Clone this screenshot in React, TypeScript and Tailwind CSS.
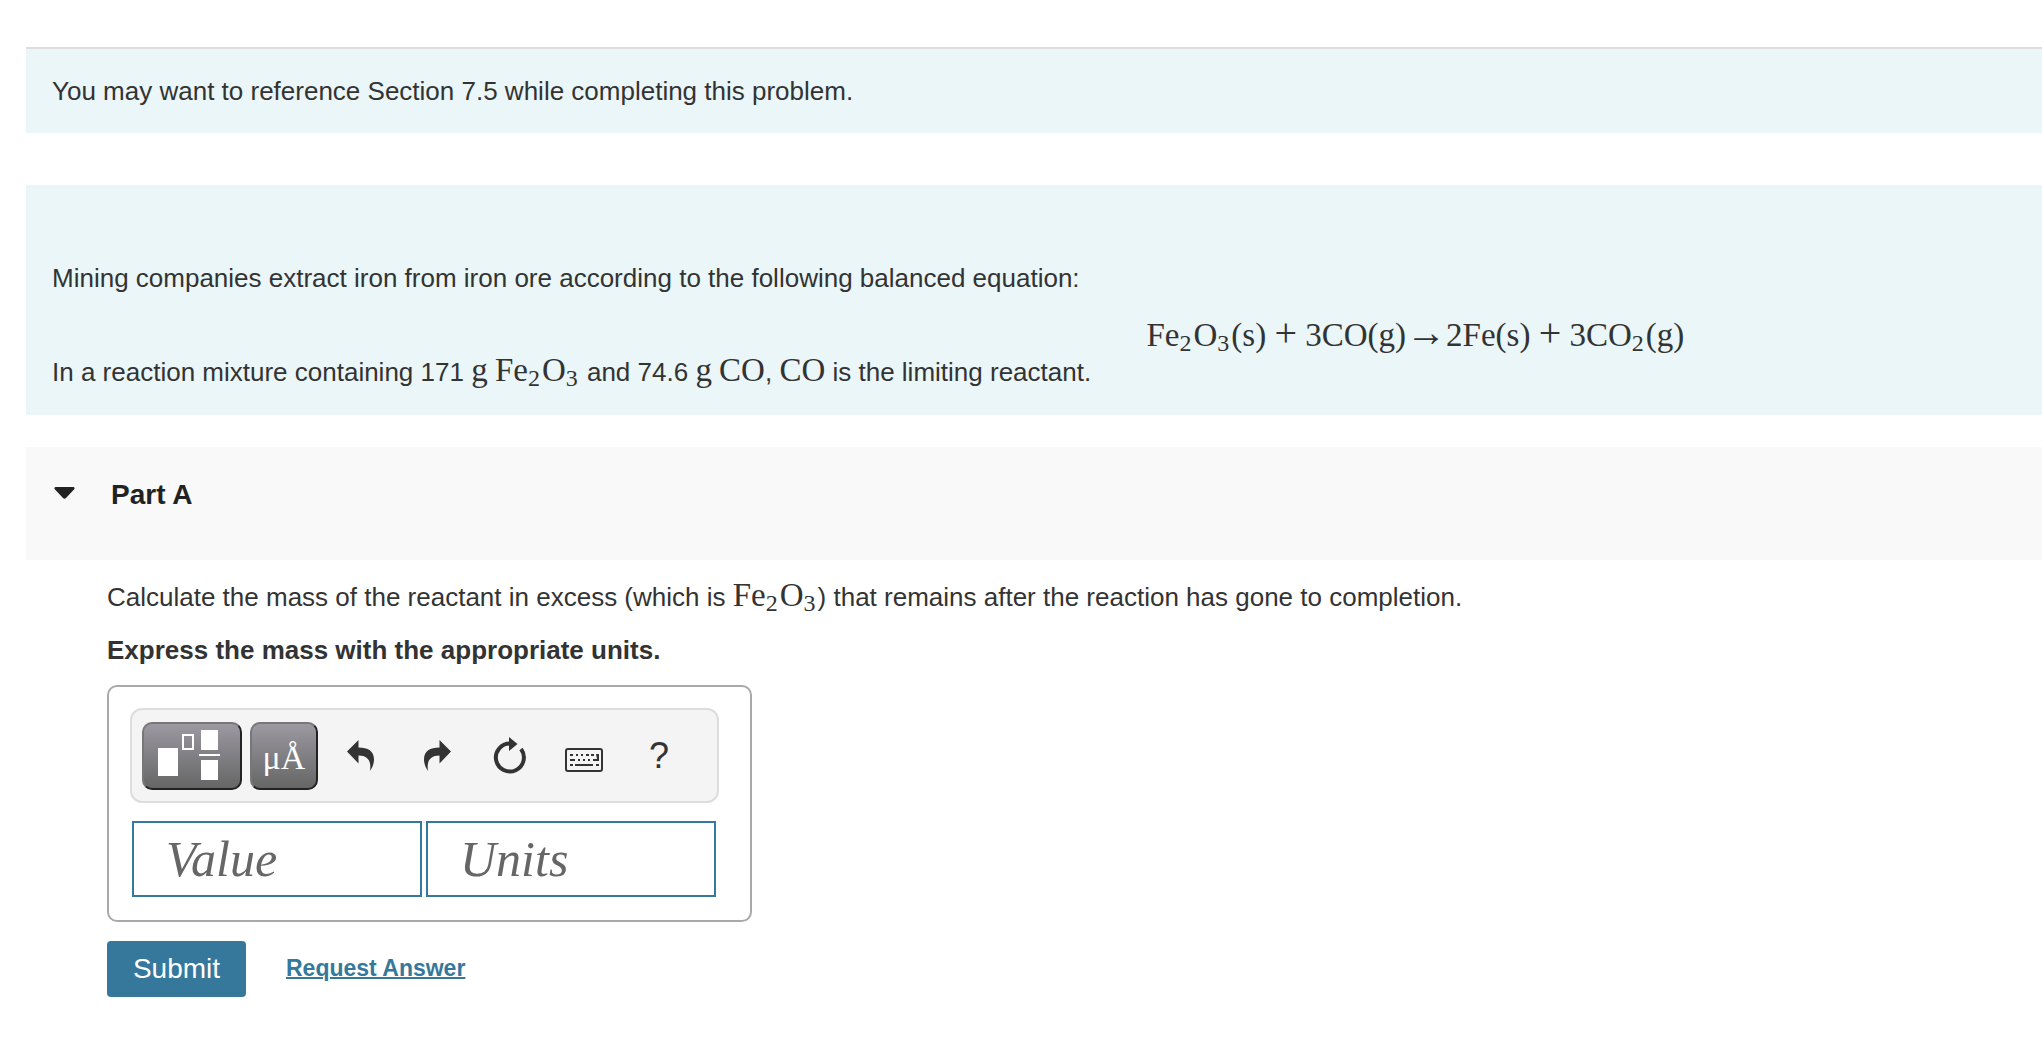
import type { ReactNode } from "react";

// serif spans have no line height of their own, so text lines stay evenly spaced
const Chem = ({ children }: { children: ReactNode }) => (
  <span className="font-['Liberation_Serif',serif] text-[33px] leading-[0]">{children}</span>
);

const Sub = ({ children }: { children: ReactNode }) => (
  <sub className="bottom-[-5px] mr-[2px] text-[24px]">{children}</sub>
);

const Op = ({ children }: { children: ReactNode }) => (
  <span className="text-[40px] leading-[0]">{children}</span>
);

const IronOxide = () => (
  <Chem>
    Fe<Sub>2</Sub>O<Sub>3</Sub>
  </Chem>
);

function TemplatesIcon() {
  return (
    <svg width="68" height="52" viewBox="0 0 68 52" fill="#fff" aria-hidden="true">
      <rect x="0" y="18" width="20" height="28" />
      <rect x="25" y="5" width="10" height="14" fill="none" stroke="#fff" strokeWidth="2" />
      <rect x="43" y="0" width="17" height="20" />
      <rect x="41" y="24" width="21" height="2" />
      <rect x="43" y="30" width="17" height="20" />
    </svg>
  );
}

function ArrowIcon({ flip = false }: { flip?: boolean }) {
  return (
    <svg width="27" height="31" viewBox="0 0 27 31" fill="#333" className={flip ? "-scale-x-100" : ""} aria-hidden="true">
      <path d="M0 11.500 11.500 0v7.500C21 7.500 27 11 27 19.500c0 4-1.500 8-4 11.500C24.500 21 21 15.500 11.500 15.500v8z" />
    </svg>
  );
}

function ResetIcon() {
  return (
    <svg width="34" height="38" viewBox="0 0 34 38" aria-hidden="true">
      <path d="M17 6.500A14 14 0 1 0 28 12" fill="none" stroke="#333" strokeWidth="4" />
      <path d="M16 0 24.500 7 16 14z" fill="#333" />
    </svg>
  );
}

function KeyboardIcon() {
  return (
    <svg width="40" height="24" viewBox="0 0 40 24" fill="#333" aria-hidden="true">
      <rect x="2" y="1" width="36" height="22" rx="2" fill="none" stroke="#333" strokeWidth="2" />
      <path d="M6 6h3v2H6zM12 6h2v2h-2zM17 6h2v2h-2zM22 6h3v2h-3zM27 6h3v2h-3zM32 6h3v7h-6v-2h4zM6 11h5v2H6zM14 11h2v2h-2zM19 11h2v2h-2zM24 11h2v2h-2zM6 16h3v2H6zM11 16h18v2H11zM32 16h3v2h-3z" />
    </svg>
  );
}

export default function App() {
  return (
    <main className="overflow-hidden bg-white pt-[47px] pb-16 pl-[26px] font-['Liberation_Sans',Arial,sans-serif] text-[26px] leading-8 text-[#333]">
      <section className="border-t-2 border-[#ddd] bg-[#eaf6f8] py-[26px] pl-[26px]">
        <p>You may want to reference Section 7.5 while completing this problem.</p>
      </section>

      <section className="mt-[52px] bg-[#eaf6f8] pt-[77px] pb-[27px] pl-[26px]">
        <p>Mining companies extract iron from iron ore according to the following balanced equation:</p>
        <p className="mt-[27px] pl-[55%] whitespace-nowrap">
          <Chem>
            Fe<Sub>2</Sub>O<Sub>3</Sub>(s) <Op>+</Op> 3CO(g)<Op>→</Op>2Fe(s) <Op>+</Op> 3CO<Sub>2</Sub>(g)
          </Chem>
        </p>
        <p className="mt-[3px]">
          In a reaction mixture containing 171 <Chem>g</Chem> <IronOxide /> and 74.6 <Chem>g</Chem> <Chem>CO</Chem>, <Chem>CO</Chem> is the limiting reactant.
        </p>
      </section>

      <section>
        <header className="mt-8 flex h-[113px] items-start gap-9 bg-[#f9f9f9] pt-8 pl-7">
          <button type="button" aria-label="Collapse Part A" className="flex h-7 items-center">
            <svg width="21" height="12" viewBox="0 0 21 12" fill="#222" aria-hidden="true">
              <path d="M1.500 0h18q2 1 .5 2.500l-8 8.500q-1.500 1.500-3 0L1 2.500Q-.5 1 1.500 0z" />
            </svg>
          </button>
          <h2 className="text-[28px] font-bold text-[#222]">Part A</h2>
        </header>

        <div className="pt-[21px] pl-[81px]">
          <p>
            Calculate the mass of the reactant in excess (which is <IronOxide />) that remains after the reaction has gone to completion.
          </p>
          <p className="mt-[21px] font-bold">Express the mass with the appropriate units.</p>

          <form>
            <div className="mt-[19px] w-fit rounded-[10px] border-2 border-[#a9a9a9] pt-[21px] pr-[31px] pb-[23px] pl-[21px]">
              <div className="flex h-[95px] items-center rounded-xl border-2 border-[#ddd] bg-[#f4f4f4] px-[10px]">
                <button type="button" aria-label="Templates" className="flex h-[68px] w-[100px] items-center justify-center rounded-[10px] border-2 border-t-[#777] border-r-[#222] border-b-[#222] border-l-[#777] bg-linear-to-b from-[#9c99a2] to-[#666]">
                  <TemplatesIcon />
                </button>
                <button type="button" aria-label="Symbols" className="ml-2 h-[68px] w-[68px] rounded-[10px] border-2 border-t-[#777] border-r-[#222] border-b-[#222] border-l-[#777] bg-linear-to-b from-[#9c99a2] to-[#666] pt-1 font-['Liberation_Serif',serif] text-[34px] text-white">
                  μÅ
                </button>
                <button type="button" aria-label="Undo" className="ml-[29px]"><ArrowIcon /></button>
                <button type="button" aria-label="Redo" className="ml-[50px]"><ArrowIcon flip /></button>
                <button type="button" aria-label="Reset" className="ml-[42px]"><ResetIcon /></button>
                <button type="button" aria-label="Keyboard" className="ml-[37px] pt-2"><KeyboardIcon /></button>
                <button type="button" aria-label="Help" className="ml-[45px] text-[36px]">?</button>
              </div>
              <div className="mt-[18px] flex gap-1 pr-[3px] pl-[2px] font-['Liberation_Serif',serif] text-[50px] leading-none italic">
                <input aria-label="Value" placeholder="Value" className="h-[76px] w-[290px] border-2 border-[#35789b] pl-8 placeholder:text-[#666]" />
                <input aria-label="Units" placeholder="Units" className="h-[76px] w-[290px] border-2 border-[#35789b] pl-8 placeholder:text-[#666]" />
              </div>
            </div>

            <div className="mt-[19px] flex items-center gap-10">
              <button type="submit" className="h-14 w-[139px] rounded bg-[#35789b] text-[28px] text-white">Submit</button>
              <a href="#answer" className="pb-[2px] text-[23px] font-bold text-[#35789b] underline decoration-2">Request Answer</a>
            </div>
          </form>
        </div>
      </section>
    </main>
  );
}
